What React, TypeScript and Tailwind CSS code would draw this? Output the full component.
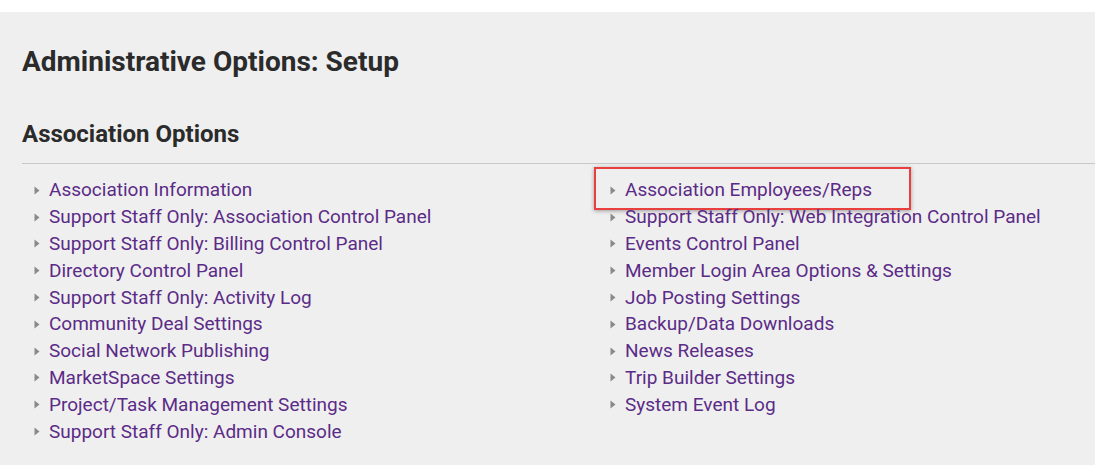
const leftItems = [
  "Association Information",
  "Support Staff Only: Association Control Panel",
  "Support Staff Only: Billing Control Panel",
  "Directory Control Panel",
  "Support Staff Only: Activity Log",
  "Community Deal Settings",
  "Social Network Publishing",
  "MarketSpace Settings",
  "Project/Task Management Settings",
  "Support Staff Only: Admin Console",
];

const rightItems = [
  "Association Employees/Reps",
  "Support Staff Only: Web Integration Control Panel",
  "Events Control Panel",
  "Member Login Area Options & Settings",
  "Job Posting Settings",
  "Backup/Data Downloads",
  "News Releases",
  "Trip Builder Settings",
  "System Event Log",
];

function Caret() {
  return (
    <svg width="6" height="9" viewBox="0 0 6 9" className="shrink-0">
      <path d="M0.5 0.5 L5.5 4.5 L0.5 8.5 Z" fill="#8a8a8a" />
    </svg>
  );
}

function OptionList({ items }: { items: string[] }) {
  return (
    <ul className="flex flex-col">
      {items.map((item) => (
        <li key={item} className="relative flex items-center h-[26.8px] pl-[12px]">
          <Caret />
          <a href="#" className="ml-[9px] text-[19px] leading-[26px] text-[#5b2b87] whitespace-nowrap">
            {item}
          </a>
          {item === "Association Employees/Reps" && (
            <span className="absolute left-[-4px] top-[-10px] w-[317px] h-[43px] border-2 border-[#ea3f3f] shadow-[0_1px_4px_rgba(0,0,0,0.35)] pointer-events-none" />
          )}
        </li>
      ))}
    </ul>
  );
}

export default function App() {
  return (
    <div className="w-[1095px] h-[465px] bg-white pt-[12px] overflow-hidden font-['Roboto',sans-serif]">
      <div className="h-full bg-[#efefef] pl-[22px]">
        <h1 className="pt-[34px] text-[28px] leading-[32px] font-bold text-[#2b2b2b]">
          Administrative Options: Setup
        </h1>
        <h2 className="mt-[41px] text-[24px] leading-[30px] font-bold text-[#2b2b2b]">
          Association Options
        </h2>
        <div className="mt-[14px] border-t border-[#c8c8c8]" />
        <div className="flex pt-[13px]">
          <div className="w-[576px]">
            <OptionList items={leftItems} />
          </div>
          <div>
            <OptionList items={rightItems} />
          </div>
        </div>
      </div>
    </div>
  );
}
